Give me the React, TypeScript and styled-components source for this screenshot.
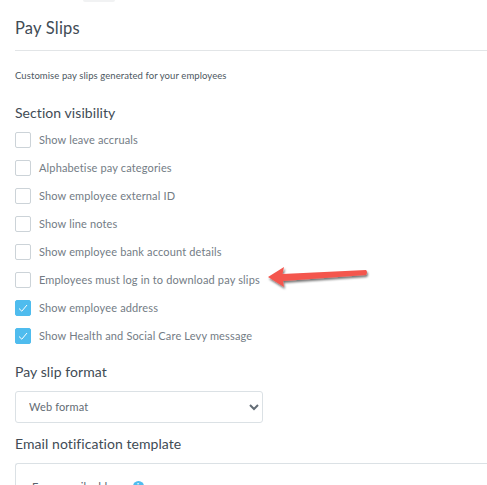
import React from "react";
import styled, { createGlobalStyle } from "styled-components";

const GlobalStyle = createGlobalStyle`
  html, body {
    margin: 0;
    padding: 0;
    background: #fff;
    overflow: hidden;
  }
  body {
    font-family: Lato, "Liberation Sans", sans-serif;
  }
`;

const Page = styled.div`
  position: relative;
  width: 487px;
  height: 485px;
  overflow: hidden;
  background: #fff;
  color: #3f4a54;
`;

const TopTab = styled.div`
  width: 32px;
  height: 2px;
  margin-left: 83px;
  background: #f1f2f3;
  border-radius: 0 0 3px 3px;
`;

const Header = styled.div`
  margin-left: 15px;
  height: 49px;
  border-bottom: 1px solid #e2e5e7;
  box-sizing: border-box;
  padding-top: 16px;
`;

const Title = styled.h1`
  margin: 0;
  font-size: 16.5px;
  line-height: 21px;
  font-weight: 400;
  letter-spacing: 0.2px;
  color: #414b55;
`;

const Intro = styled.p`
  margin: 19px 0 0 15px;
  font-size: 9.5px;
  line-height: 12px;
  letter-spacing: 0.08px;
  color: #4d5761;
`;

const Heading = styled.h2<{ $top: number }>`
  margin: ${(p) => p.$top}px 0 0 15px;
  font-size: 14px;
  line-height: 18px;
  font-weight: 400;
  letter-spacing: 0.07px;
  color: #414b55;
`;

const OptionList = styled.ul`
  list-style: none;
  margin: 10px 0 0 15px;
  padding: 0;
  display: flex;
  flex-direction: column;
  gap: 12px;
`;

const Option = styled.li`
  display: flex;
  align-items: center;
  gap: 8px;
  height: 16px;
  font-size: 11px;
  letter-spacing: 0.15px;
  color: #737c85;
`;

const OptionLabel = styled.span`
  padding-bottom: 2px;
`;

const Box = styled.span<{ $checked?: boolean }>`
  width: 16px;
  height: 16px;
  box-sizing: border-box;
  border-radius: 2px;
  border: 1px solid ${(p) => (p.$checked ? "#4fbcee" : "#ccd3d8")};
  background: ${(p) => (p.$checked ? "#4fbcee" : "#fff")};
  display: flex;
  align-items: center;
  justify-content: center;
`;

const SelectBox = styled.select`
  display: block;
  margin: 10px 0 0 15px;
  width: 248px;
  height: 32px;
  padding: 0 9px 2px;
  background: #fff;
  border: 1px solid #dbe1e5;
  border-radius: 3px;
  font-family: Lato, "Liberation Sans", sans-serif;
  font-size: 11px;
  letter-spacing: 0.15px;
  color: #636c75;
`;

const Card = styled.div`
  margin: 10px 0 0 15px;
  height: 60px;
  box-sizing: border-box;
  padding-top: 16px;
  padding-left: 16px;
  border: 1px solid #dbe1e5;
  border-right: none;
  border-radius: 3px 0 0 3px;
  display: flex;
  align-items: flex-start;
  gap: 3px;
  font-size: 11px;
  line-height: 13px;
  letter-spacing: 0.1px;
  color: #59636c;
`;

const InfoDot = styled.span`
  width: 11px;
  height: 11px;
  margin-top: 1px;
  border-radius: 50%;
  background: #4fbcee;
  color: #fff;
  font-size: 9px;
  line-height: 11px;
  font-weight: 700;
  text-align: center;
`;

const Annotation = styled.svg`
  position: absolute;
  left: 260px;
  top: 258px;
`;

const options: { label: string; checked?: boolean }[] = [
  { label: "Show leave accruals" },
  { label: "Alphabetise pay categories" },
  { label: "Show employee external ID" },
  { label: "Show line notes" },
  { label: "Show employee bank account details" },
  { label: "Employees must log in to download pay slips" },
  { label: "Show employee address", checked: true },
  { label: "Show Health and Social Care Levy message", checked: true },
];

const Tick = () => (
  <svg width="12" height="12" viewBox="0 0 12 12" fill="none">
    <path d="M2 6.5 L4.8 9.2 L10 3" stroke="#fff" strokeWidth="1" />
  </svg>
);

const App = () => {
  return (
    <Page>
      <GlobalStyle />
      <TopTab />
      <Header>
        <Title>Pay Slips</Title>
      </Header>
      <Intro>Customise pay slips generated for your employees</Intro>
      <Heading $top={22}>Section visibility</Heading>
      <OptionList>
        {options.map((option) => (
          <Option key={option.label}>
            <Box $checked={option.checked}>{option.checked && <Tick />}</Box>
            <OptionLabel>{option.label}</OptionLabel>
          </Option>
        ))}
      </OptionList>
      <Heading $top={19}>Pay slip format</Heading>
      <SelectBox defaultValue="web">
        <option value="web">Web format</option>
      </SelectBox>
      <Heading $top={12}>Email notification template</Heading>
      <Card>
        From email address: <InfoDot>i</InfoDot>
      </Card>
      <Annotation width="115" height="40" viewBox="0 0 115 40">
        <defs>
          <filter id="arrowShadow" x="-10%" y="-30%" width="120%" height="170%">
            <feDropShadow dx="1" dy="2" stdDeviation="1.2" floodColor="#000" floodOpacity="0.55" />
          </filter>
        </defs>
        <path
          d="M8 19 L24 9 L22.5 16 L106 12 Q108 14 106 17 L23 23 L24 29 Z"
          fill="#f4564e"
          filter="url(#arrowShadow)"
        />
      </Annotation>
    </Page>
  );
};

export default App;
